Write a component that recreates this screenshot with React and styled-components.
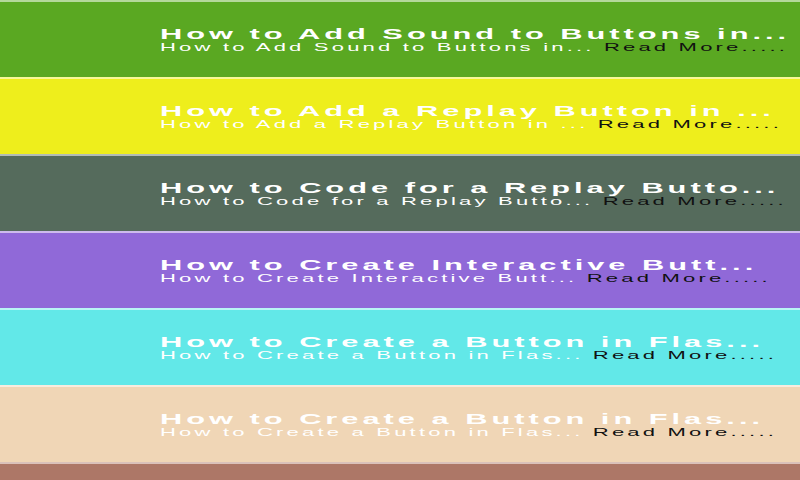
import React from "react";
import styled, { createGlobalStyle } from "styled-components";

const GlobalStyle = createGlobalStyle`
  html, body {
    margin: 0;
    padding: 0;
    width: 800px;
    height: 480px;
    overflow: hidden;
    background: #ffffff;
    font-family: "Liberation Sans", Arial, sans-serif;
  }
`;

const List = styled.div`
  display: flex;
  flex-direction: column;
  width: 800px;
  height: 480px;
  overflow: hidden;
`;

const Row = styled.div`
  display: flex;
  align-items: center;
  height: 75px;
  border-top: 2px solid rgba(255, 255, 255, 0.55);
  background: ${(p) => p.$bg};
  padding-left: 160px;
  overflow: hidden;
  flex-shrink: 0;
`;

const TextBlock = styled.div`
  display: flex;
  flex-direction: column;
  transform: scaleX(2);
  transform-origin: left center;
  white-space: nowrap;
`;

const Title = styled.div`
  font-weight: bold;
  font-size: 15.4px;
  line-height: 15px;
  letter-spacing: 2px;
  color: #ffffff;
`;

const Sub = styled.div`
  font-size: 11px;
  line-height: 13px;
  letter-spacing: 1.6px;
  color: #ffffff;
`;

const More = styled.span`
  color: #111111;
`;

const items = [
  { bg: "#5aa822", title: "How to Add Sound to Buttons in...", sub: "How to Add Sound to Buttons in..." },
  { bg: "#eeee1c", title: "How to Add a Replay Button in ...", sub: "How to Add a Replay Button in ..." },
  { bg: "#556b5c", title: "How to Code for a Replay Butto...", sub: "How to Code for a Replay Butto..." },
  { bg: "#9069d8", title: "How to Create Interactive Butt...", sub: "How to Create Interactive Butt..." },
  { bg: "#62e8e8", title: "How to Create a Button in Flas...", sub: "How to Create a Button in Flas..." },
  { bg: "#f0d6b6", title: "How to Create a Button in Flas...", sub: "How to Create a Button in Flas..." },
  { bg: "#ad7767" },
];

export default function App() {
  return (
    <>
      <GlobalStyle />
      <List>
        {items.map((it, i) => (
          <Row key={i} $bg={it.bg}>
            {it.title && (
              <TextBlock>
                <Title>{it.title}</Title>
                <Sub>
                  {it.sub} <More>Read More.....</More>
                </Sub>
              </TextBlock>
            )}
          </Row>
        ))}
      </List>
    </>
  );
}
